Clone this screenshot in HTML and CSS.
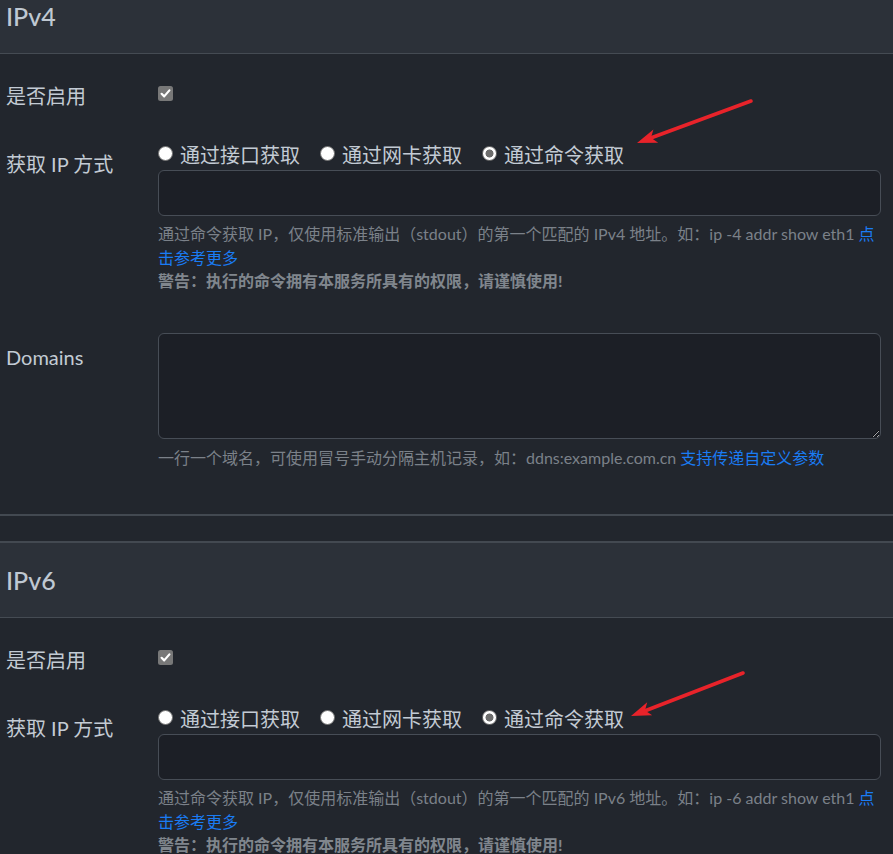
FILE: index.html
```html
<!DOCTYPE html>
<html lang="zh-CN">
<head>
<meta charset="utf-8">
<title>DDNS 设置</title>
<link rel="stylesheet" href="styles.css">
</head>
<body>
<div class="page">
  <section class="card">
    <div class="card-header"><h5 class="card-title">IPv4</h5></div>
    <div class="card-body">
      <div class="row">
        <label class="col-label">是否启用</label>
        <div class="col-ctrl">
          <span class="checkbox">
            <input type="checkbox" checked>
            <svg viewBox="0 0 15 15" width="15" height="15"><rect width="15" height="15" rx="2.5" fill="#787878"/><path d="M3.6 7.8l2.6 2.6 5.2-6" fill="none" stroke="#fff" stroke-width="2.2" stroke-linecap="round" stroke-linejoin="round"/></svg>
          </span>
        </div>
      </div>
      <div class="row row-method">
        <label class="col-label">获取 IP 方式</label>
        <div class="col-ctrl">
          <div class="radios">
            <label class="radio"><input type="radio" name="v4">通过接口获取</label>
            <label class="radio"><input type="radio" name="v4">通过网卡获取</label>
            <label class="radio"><input type="radio" name="v4" checked>通过命令获取</label>
          </div>
          <input class="text-input" type="text">
          <div class="help">通过命令获取 IP，仅使用标准输出（stdout）的第一个匹配的 IPv4 地址。如：ip -4 addr show eth1 <a href="#">点击参考更多</a><br><strong>警告：执行的命令拥有本服务所具有的权限，请谨慎使用!</strong></div>
        </div>
      </div>
      <div class="row">
        <label class="col-label">Domains</label>
        <div class="col-ctrl">
          <textarea class="text-area" rows="3"></textarea>
          <div class="help help-domains">一行一个域名，可使用冒号手动分隔主机记录，如：ddns:example.com.cn <a href="#">支持传递自定义参数</a></div>
        </div>
      </div>
    </div>
    <svg class="arrow arrow-v4" viewBox="630 95 130 55" width="130" height="55">
      <line x1="751" y1="101" x2="648" y2="139" stroke="#e8232a" stroke-width="3.6" stroke-linecap="round"/>
      <polygon points="637,143 653.4,129.5 651,137.8 658.2,142.7" fill="#e8232a"/>
    </svg>
  </section>

  <section class="card">
    <div class="card-header"><h5 class="card-title">IPv6</h5></div>
    <div class="card-body">
      <div class="row">
        <label class="col-label">是否启用</label>
        <div class="col-ctrl">
          <span class="checkbox">
            <input type="checkbox" checked>
            <svg viewBox="0 0 15 15" width="15" height="15"><rect width="15" height="15" rx="2.5" fill="#787878"/><path d="M3.6 7.8l2.6 2.6 5.2-6" fill="none" stroke="#fff" stroke-width="2.2" stroke-linecap="round" stroke-linejoin="round"/></svg>
          </span>
        </div>
      </div>
      <div class="row row-method">
        <label class="col-label">获取 IP 方式</label>
        <div class="col-ctrl">
          <div class="radios">
            <label class="radio"><input type="radio" name="v6">通过接口获取</label>
            <label class="radio"><input type="radio" name="v6">通过网卡获取</label>
            <label class="radio"><input type="radio" name="v6" checked>通过命令获取</label>
          </div>
          <input class="text-input" type="text">
          <div class="help">通过命令获取 IP，仅使用标准输出（stdout）的第一个匹配的 IPv6 地址。如：ip -6 addr show eth1 <a href="#">点击参考更多</a><br><strong>警告：执行的命令拥有本服务所具有的权限，请谨慎使用!</strong></div>
        </div>
      </div>
      <div class="row">
        <label class="col-label">Domains</label>
        <div class="col-ctrl">
          <textarea class="text-area" rows="3"></textarea>
          <div class="help help-domains">一行一个域名，可使用冒号手动分隔主机记录，如：ddns:example.com.cn <a href="#">支持传递自定义参数</a></div>
        </div>
      </div>
    </div>
    <svg class="arrow arrow-v6" viewBox="620 665 135 60" width="135" height="60">
      <line x1="743" y1="673" x2="642" y2="712" stroke="#e8232a" stroke-width="3.6" stroke-linecap="round"/>
      <polygon points="631,716 647.2,702.3 645,710.6 652.2,715.3" fill="#e8232a"/>
    </svg>
  </section>
</div>
</body>
</html>
```

FILE: styles.css
```css
html, body {
  margin: 0;
  padding: 0;
}

body {
  background: #22262d;
  color: #c3cbd4;
  font-family: "Lato", "Noto Sans CJK SC", sans-serif;
  color-scheme: dark;
  overflow: hidden;
}

.page {
  margin-top: -23px;
}

.card {
  position: relative;
  background: #22262d;
  border-top: 2px solid #434951;
  border-bottom: 2px solid #434951;
}

.card + .card {
  margin-top: 25px;
}

.card-header {
  background: #2c3139;
  border-bottom: 1px solid #454b53;
  padding: 22px 6px;
}

.card-title {
  margin: 0;
  font-size: 25px;
  line-height: 30px;
  font-weight: 500;
  color: #bfc8d2;
}

.card-body {
  padding: 18px 12px 44.5px 6px;
}

.row {
  display: flex;
  margin-bottom: 20px;
}

.row:last-child {
  margin-bottom: 0;
}

.row-method {
  margin-bottom: 40.5px;
}

.col-label {
  flex: none;
  width: 152px;
  font-size: 20px;
  line-height: 30px;
  padding: 9px 0;
}

.col-ctrl {
  flex: 1;
  min-width: 0;
}

.checkbox {
  position: relative;
  display: block;
  width: 15px;
  height: 15px;
  margin-top: 14px;
}

.checkbox svg {
  display: block;
}

.checkbox input {
  position: absolute;
  inset: 0;
  margin: 0;
  opacity: 0;
}

.radios {
  display: flex;
  gap: 20px;
}

.radio {
  display: flex;
  align-items: flex-start;
  font-size: 20px;
  line-height: 30px;
  color: #c3cbd4;
}

.radio input {
  appearance: none;
  flex: none;
  width: 15px;
  height: 15px;
  margin: 6px 7px 0 0;
  box-sizing: border-box;
  border: 1px solid #6f6f6f;
  border-radius: 50%;
  background: #fff;
}

.radio input:checked {
  background: radial-gradient(circle, #6d6d6d 0 3.7px, #fff 4.3px);
}

.text-input,
.text-area {
  display: block;
  width: 100%;
  box-sizing: border-box;
  margin: 0;
  background: #1c1f26;
  border: 1px solid #474d56;
  border-radius: 6px;
  color: #c3cbd4;
  font-family: inherit;
  font-size: 20px;
  line-height: 30px;
  padding: 7px 15px;
  outline: none;
}

.text-input {
  height: 46px;
}

.text-area {
  height: 106px;
  resize: vertical;
}

.help {
  margin-top: 6px;
  font-size: 16px;
  line-height: 23.5px;
  color: #7b8189;
}

.help-domains {
  margin-top: 7px;
}

.help a {
  color: #1a7cf4;
  text-decoration: none;
}

.help strong {
  font-weight: 700;
  color: #80868d;
}

.arrow {
  position: absolute;
  pointer-events: none;
}

.arrow-v4 {
  left: 630px;
  top: 116px;
}

.arrow-v6 {
  left: 620px;
  top: 122px;
}
```
